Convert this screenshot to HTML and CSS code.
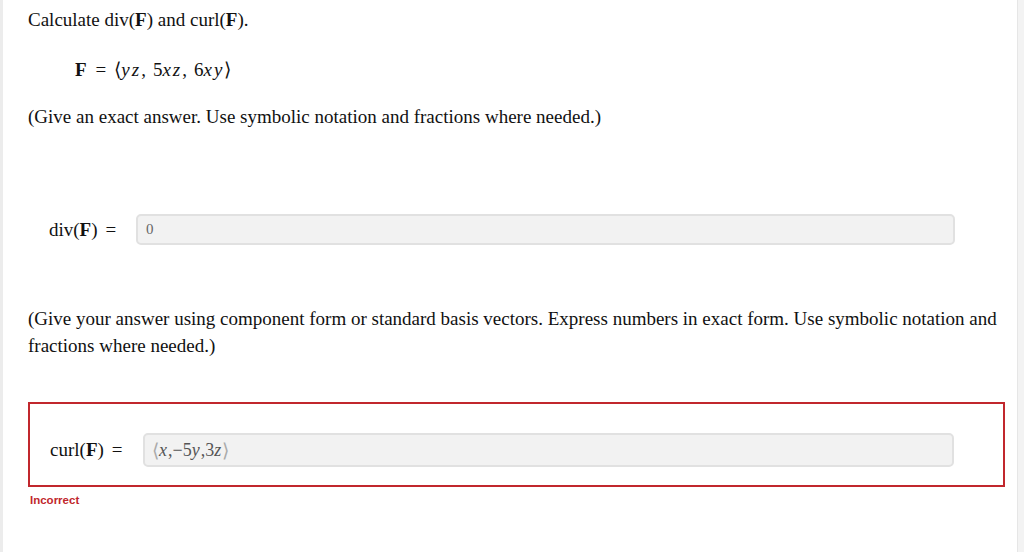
FILE: index.html
```html
<!DOCTYPE html>
<html>
<head>
<meta charset="utf-8">
<link rel="stylesheet" href="styles.css">
</head>
<body>
<div class="frame">
  <div class="page">
    <p class="q">Calculate div(<b>F</b>) and curl(<b>F</b>).</p>
    <p class="formula"><b>F</b><span class="eq">=</span>⟨<i>yz</i>,<span class="sp"></span>5<i>xz</i>,<span class="sp"></span>6<i>xy</i>⟩</p>
    <p class="hint1">(Give an exact answer. Use symbolic notation and fractions where needed.)</p>
    <div class="row div-row">
      <span class="label">div(<b>F</b>)<span class="leq">=</span></span>
      <div class="input div-input">0</div>
    </div>
    <p class="hint2">(Give your answer using component form or standard basis vectors. Express numbers in exact form. Use symbolic notation and fractions where needed.)</p>
    <div class="wrong">
      <div class="row curl-row">
        <span class="label">curl(<b>F</b>)<span class="leq">=</span></span>
        <div class="input curl-input"><span class="ang">⟨</span><i>x</i>,−5<i>y</i>,3<i>z</i><span class="ang">⟩</span></div>
      </div>
    </div>
    <div class="incorrect">Incorrect</div>
  </div>
  <div class="scroll"></div>
</div>
</body>
</html>
```
FILE: styles.css
```css
html, body {
  margin: 0;
  padding: 0;
  background: #ffffff;
}
body {
  font-family: "Liberation Serif", "Times New Roman", serif;
  font-size: 19px;
  color: #111;
}
.frame {
  display: flex;
  height: 552px;
  border-left: 3px solid #ececec;
  box-sizing: border-box;
}
.page {
  flex: 1;
  padding: 0 12px 0 25px;
}
.scroll {
  width: 6px;
  background: #f3f3f3;
  border-left: 1px solid #e6e6e6;
}
p { margin: 0; }
.q {
  padding-top: 9px;
  line-height: 22px;
}
.formula {
  margin-top: 28px;
  padding-left: 47px;
  line-height: 22px;
}
.formula i { letter-spacing: 2px; }
.sp { display: inline-block; width: 7px; }
.eq { margin: 0 8px 0 9px; }
.leq { margin-left: 8px; }
.hint1 {
  margin-top: 25px;
  line-height: 22px;
}
.row {
  display: flex;
  align-items: center;
}
.div-row {
  margin-top: 86px;
  padding-left: 21px;
}
.label {
  white-space: nowrap;
}
.div-row .label { width: 87px; }
.input {
  box-sizing: border-box;
  background: #f2f2f2;
  border: 2px solid #e1e1e1;
  border-radius: 5px;
  color: #666;
  font-size: 15px;
  display: flex;
  align-items: center;
}
.div-input {
  width: 819px;
  height: 31px;
  padding-left: 8px;
}
.hint2 {
  margin-top: 60px;
  line-height: 27px;
}
.wrong {
  margin-top: 43px;
  width: 977px;
  height: 85px;
  box-sizing: border-box;
  border: 2px solid #c1272d;
  display: flex;
  align-items: center;
  padding-top: 11px;
}
.curl-row {
  padding-left: 20px;
}
.curl-row .label { width: 93px; }
.curl-input {
  width: 811px;
  height: 34px;
  padding-left: 7px;
  font-size: 18px;
  color: #555;
}
.curl-input i { letter-spacing: 1px; }
.ang { color: #aaa; font-size: 19px; }
.incorrect {
  margin-top: 7px;
  margin-left: 2px;
  font-family: "Liberation Sans", Arial, sans-serif;
  font-weight: bold;
  font-size: 11.5px;
  color: #c1272d;
}
```
